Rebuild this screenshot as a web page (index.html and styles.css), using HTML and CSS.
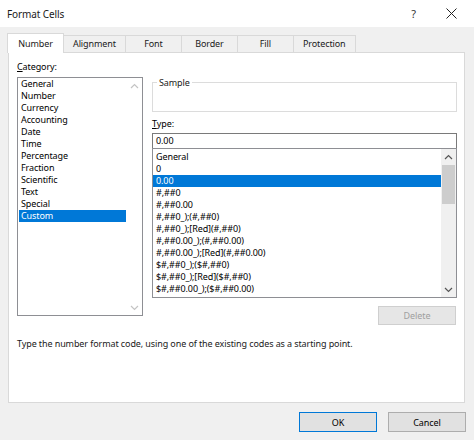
FILE: index.html
```html
<!DOCTYPE html>
<html lang="en">

<head>
  <meta charset="UTF-8">
  <meta name="viewport" content="width=device-width, initial-scale=1.0">
  <title>Format Cells</title>
  <link rel="stylesheet" href="styles.css">
</head>

<body>
  <div class="dialog">
    <div class="titlebar">
      <span class="title">Format Cells</span>
      <div class="title-buttons">
        <span class="help">?</span>
        <svg class="close" width="11" height="11" viewBox="0 0 11 11">
          <path d="M0.5 0.5 L10.5 10.5 M10.5 0.5 L0.5 10.5" stroke="#222" stroke-width="1" fill="none" />
        </svg>
      </div>
    </div>

    <div class="tabs">
      <div class="tab active">Number</div>
      <div class="tab">Alignment</div>
      <div class="tab">Font</div>
      <div class="tab">Border</div>
      <div class="tab">Fill</div>
      <div class="tab">Protection</div>
    </div>

    <div class="panel">
      <div class="columns">
        <div class="left-col">
          <div class="label"><u>C</u>ategory:</div>
          <div class="listbox category">
            <ul class="items">
              <li>General</li>
              <li>Number</li>
              <li>Currency</li>
              <li>Accounting</li>
              <li>Date</li>
              <li>Time</li>
              <li>Percentage</li>
              <li>Fraction</li>
              <li>Scientific</li>
              <li>Text</li>
              <li>Special</li>
              <li class="selected">Custom</li>
            </ul>
            <div class="scrollbar disabled">
              <svg class="arrow" width="9" height="6" viewBox="0 0 9 6">
                <path d="M1 5 L4.5 1.5 L8 5" stroke="#c4c4c4" stroke-width="1.2" fill="none" />
              </svg>
              <div class="track"></div>
              <svg class="arrow" width="9" height="6" viewBox="0 0 9 6">
                <path d="M1 1 L4.5 4.5 L8 1" stroke="#c4c4c4" stroke-width="1.2" fill="none" />
              </svg>
            </div>
          </div>
        </div>

        <div class="right-col">
          <div class="sample"><span class="sample-label">Sample</span></div>
          <div class="label type-label"><u>T</u>ype:</div>
          <div class="textbox">0.00</div>
          <div class="listbox formats">
            <ul class="items">
              <li>General</li>
              <li>0</li>
              <li class="selected">0.00</li>
              <li>#,##0</li>
              <li>#,##0.00</li>
              <li>#,##0_);(#,##0)</li>
              <li>#,##0_);[Red](#,##0)</li>
              <li>#,##0.00_);(#,##0.00)</li>
              <li>#,##0.00_);[Red](#,##0.00)</li>
              <li>$#,##0_);($#,##0)</li>
              <li>$#,##0_);[Red]($#,##0)</li>
              <li>$#,##0.00_);($#,##0.00)</li>
            </ul>
            <div class="scrollbar">
              <svg class="arrow" width="9" height="6" viewBox="0 0 9 6">
                <path d="M1 5 L4.5 1.5 L8 5" stroke="#555" stroke-width="1.2" fill="none" />
              </svg>
              <div class="track">
                <div class="thumb"></div>
              </div>
              <svg class="arrow" width="9" height="6" viewBox="0 0 9 6">
                <path d="M1 1 L4.5 4.5 L8 1" stroke="#555" stroke-width="1.2" fill="none" />
              </svg>
            </div>
          </div>
          <div class="actions">
            <button class="btn" disabled>Delete</button>
          </div>
        </div>
      </div>

      <p class="hint">Type the number format code, using one of the existing codes as a starting point.</p>
    </div>

    <div class="footer">
      <button class="btn default">OK</button>
      <button class="btn">Cancel</button>
    </div>
  </div>
</body>

</html>
```

FILE: styles.css
```css
* {
  margin: 0;
  padding: 0;
  box-sizing: border-box;
}

body {
  background-color: #f0f0f0;
  font-family: "Noto Sans", "Open Sans", sans-serif;
  font-size: 9px;
  letter-spacing: -0.1px;
  line-height: 12px;
  color: #000000;
}

.dialog {
  width: 474px;
  height: 440px;
}

.titlebar {
  height: 27px;
  background-color: #ffffff;
  display: flex;
  align-items: center;
  justify-content: space-between;
  padding-left: 7px;
  padding-right: 17px;
}

.title {
  font-size: 10px;
  color: #1a1a1a;
}

.title-buttons {
  display: flex;
  align-items: center;
  gap: 30px;
}

.help {
  font-size: 11px;
  color: #333333;
}

.tabs {
  height: 25px;
  display: flex;
  align-items: flex-end;
  padding-left: 7px;
}

.tab {
  height: 17px;
  min-width: 57px;
  padding: 0 9px;
  margin-right: -1px;
  border: 1px solid #d9d9d9;
  border-bottom: none;
  display: flex;
  align-items: center;
  justify-content: center;
  color: #1a1a1a;
}

.tab.active {
  height: 20px;
  background-color: #ffffff;
  margin-bottom: -1px;
  position: relative;
  z-index: 1;
}

.panel {
  height: 351px;
  margin: 0 9px 0 8px;
  background-color: #ffffff;
  border: 1px solid #d9d9d9;
  padding: 8px 7px 0 8px;
}

.columns {
  display: flex;
  gap: 9px;
}

.left-col {
  width: 126px;
}

.right-col {
  width: 305px;
}

.label u {
  text-decoration-thickness: 1px;
  text-underline-offset: 1px;
}

.listbox {
  display: flex;
  border: 1px solid #8e8f94;
  background-color: #ffffff;
}

.listbox .items {
  flex: 1;
  list-style: none;
  overflow: hidden;
}

.listbox li {
  height: 12px;
  white-space: nowrap;
}

.listbox li.selected {
  background-color: #0078d7;
  color: #ffffff;
}

.category {
  margin-top: 4px;
  height: 239px;
}

.category .items {
  padding: 0 1px;
}

.category li {
  padding-left: 2px;
}

.formats {
  margin-top: -1px;
  height: 150px;
}

.formats .items {
  padding-top: 2px;
}

.formats li {
  padding-left: 3px;
}

.scrollbar {
  width: 15px;
  display: flex;
  flex-direction: column;
  align-items: center;
  background-color: #f0f0f0;
}

.scrollbar.disabled {
  background-color: #ffffff;
}

.scrollbar .arrow {
  margin: 5px 0 4px;
  flex-shrink: 0;
}

.scrollbar .track {
  flex: 1;
  width: 100%;
}

.thumb {
  width: 13px;
  height: 39px;
  margin: 1px auto 0;
  background-color: #cdcdcd;
}

.sample {
  margin-top: 21px;
  height: 30px;
  border: 1px solid #dcdcdc;
}

.sample-label {
  display: inline-block;
  margin: -6px 0 0 4px;
  padding: 0 2px;
  background-color: #ffffff;
  color: #1a1a1a;
  vertical-align: top;
}

.type-label {
  margin-top: 6px;
}

.textbox {
  margin-top: 3px;
  height: 16px;
  border: 1px solid #7a7a7a;
  padding-left: 3px;
  line-height: 14px;
}

.actions {
  display: flex;
  justify-content: flex-end;
  margin-top: 8px;
  padding-right: 1px;
}

.btn {
  width: 78px;
  height: 20px;
  font-family: inherit;
  font-size: 9px;
  letter-spacing: -0.1px;
  color: #000000;
  background-color: #e1e1e1;
  border: 1px solid #adadad;
}

.btn:disabled {
  height: 19px;
  background-color: #e6e6e6;
  border-color: #cfcfcf;
  color: #a0a0a0;
}

.btn.default {
  border-color: #0078d7;
}

.hint {
  margin-top: 13px;
  color: #1a1a1a;
}

.footer {
  display: flex;
  justify-content: flex-end;
  gap: 11px;
  padding: 9px 8px 0 0;
}
```
